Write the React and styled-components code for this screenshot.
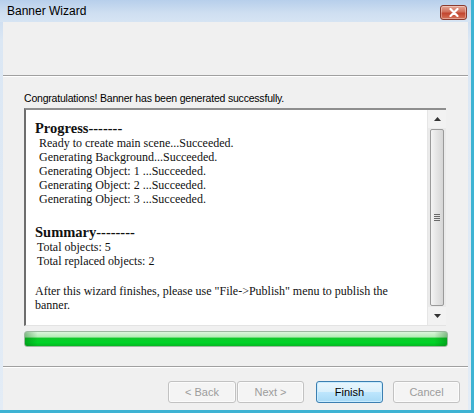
import React from 'react'
import styled, { createGlobalStyle } from 'styled-components'

const Global = createGlobalStyle`
  html, body { margin:0; padding:0; background:#f0f0f0; }
  body { font-family:"Liberation Sans", "DejaVu Sans", sans-serif; }
`;

const Window = styled.div`
  width:474px;
  height:413px;
  box-sizing:border-box;
  display:flex;
  flex-direction:column;
  background:linear-gradient(#c2d6ee, #dbe7f4 40px, #e3ecf6);
  border-right:3px solid #3eb3d3;
  border-bottom:3px solid #3eb3d3;
  overflow:hidden;
`;

const TitleBar = styled.div`
  height:22px;
  flex:none;
  display:flex;
  align-items:center;
  justify-content:space-between;
  padding:0 4px 0 7px;
  background:linear-gradient(#b7cfeb, #cfdff1 60%, #d6e4f3);
`;

const Title = styled.span`
  font-size:12px;
  color:#000;
`;

const CloseButton = styled.div`
  width:27px;
  height:15px;
  margin-top:2px;
  border:1px solid #8a3a2e;
  border-radius:3px;
  box-sizing:border-box;
  background:linear-gradient(#e6a594, #d0705c 45%, #c2452f 55%, #d5735a);
  display:flex;
  align-items:center;
  justify-content:center;
  box-shadow:inset 0 0 0 1px rgba(255,255,255,0.35);
`;

const Body = styled.div`
  flex:1;
  display:flex;
  flex-direction:column;
  margin-left:3px;
  margin-right:3px;
  background:#f0f0f0;
`;

const Header = styled.div`
  height:53px;
  flex:none;
  border-bottom:1px solid #a0a0a0;
  box-shadow:0 1px 0 #fff;
`;

const Content = styled.div`
  flex:1;
  display:flex;
  flex-direction:column;
  padding:15px 22px 0 21px;
`;

const Label = styled.div`
  font-size:10.5px;
  letter-spacing:-0.2px;
  color:#000;
  height:17px;
  line-height:14px;
`;

const TextBox = styled.div`
  height:218px;
  box-sizing:border-box;
  display:flex;
  background:#fff;
  border-top:2px solid #8e8e8e;
  border-left:2px solid #6e6e6e;
  border-bottom:1px solid #e3e3e3;
`;

const Report = styled.div`
  flex:1;
  padding:10px 30px 0 9px;
  font-family:"Liberation Serif", "Times New Roman", serif;
  font-size:12px;
  line-height:14px;
  color:#111;
`;

const Heading = styled.div`
  font-weight:bold;
  font-size:14.5px;
  line-height:16px;
  margin-top:${p => p.gap || 0}px;
`;

const Line = styled.div`
  padding-left:${p => p.indent || 0}px;
  margin-top:${p => p.gap || 0}px;
`;

const ScrollBar = styled.div`
  width:18px;
  display:flex;
  flex-direction:column;
  background:#eaeaea;
  border-left:1px solid #e6e6e6;
`;

const Arrow = styled.div`
  height:18px;
  display:flex;
  align-items:center;
  justify-content:center;
  background:#f2f2f2;
`;

const Thumb = styled.div`
  flex:1;
  margin:1px 2px;
  border:1px solid #9a9a9a;
  border-radius:2px;
  background:linear-gradient(90deg, #f4f4f4, #e4e4e4 50%, #d6d6d6);
  display:flex;
  align-items:center;
  justify-content:center;
`;

const Grip = styled.div`
  width:6px;
  height:7px;
  background:repeating-linear-gradient(#6a6a6a 0 1px, transparent 1px 2px);
`;

const ProgressBar = styled.div`
  height:16px;
  margin:5px -2px 0 0;
  border:1px solid #9db8a0;
  border-radius:3px;
  box-sizing:border-box;
  background:
    linear-gradient(90deg, rgba(0,90,10,0.35), transparent 3%, transparent 97%, rgba(0,90,10,0.35)),
    linear-gradient(#dcf6dc, #b5ecb6 35%, #10c82a 45%, #00d428 75%, #06b822);
`;

const Footer = styled.div`
  height:44px;
  flex:none;
  box-sizing:border-box;
  border-top:1px solid #a0a0a0;
  box-shadow:inset 0 1px 0 #fff;
  display:flex;
  align-items:flex-start;
  justify-content:flex-end;
  padding:14px 8px 0 0;
  margin-top:19px;
`;

const Button = styled.button`
  width:${p => p.w || 67}px;
  height:22px;
  margin-left:${p => p.gap || 0}px;
  padding:0;
  font-family:"Liberation Sans", "DejaVu Sans", sans-serif;
  font-size:11px;
  border-radius:3px;
  box-sizing:border-box;
  color:${p => p.disabled ? '#9c9c9c' : '#000'};
  border:1px solid ${p => p.primary ? '#3c7fb1' : p.disabled ? '#c2c2c2' : '#707070'};
  background:${p => p.primary
    ? 'linear-gradient(#eaf6fd, #d9f0fc 50%, #bee6fd 50%, #a7d9f5)'
    : '#f4f4f4'};
  box-shadow:${p => p.primary ? 'inset 0 0 0 1px #c8ecff' : 'inset 0 0 0 1px #fbfbfb'};
`;

const steps = [
  'Ready to create main scene...Succeeded.',
  'Generating Background...Succeeded.',
  'Generating Object: 1 ...Succeeded.',
  'Generating Object: 2 ...Succeeded.',
  'Generating Object: 3 ...Succeeded.',
]

const App = () => {
  return (
    <Window>
      <Global />
      <TitleBar>
        <Title>Banner Wizard</Title>
        <CloseButton>
          <svg width="10" height="9" viewBox="0 0 10 9">
            <path d="M1.5 1 L8.5 8 M8.5 1 L1.5 8" stroke="#fff" strokeWidth="2.2" strokeLinecap="round" />
          </svg>
        </CloseButton>
      </TitleBar>
      <Body>
        <Header />
        <Content>
          <Label>Congratulations! Banner has been generated successfully.</Label>
          <TextBox>
            <Report>
              <Heading>Progress-------</Heading>
              {steps.map(s => <Line key={s} indent={4}>{s}</Line>)}
              <Heading gap={18}>Summary--------</Heading>
              <Line indent={2}>Total objects: 5</Line>
              <Line indent={2}>Total replaced objects: 2</Line>
              <Line gap={16}>After this wizard finishes, please use "File-&gt;Publish" menu to publish the banner.</Line>
            </Report>
            <ScrollBar>
              <Arrow>
                <svg width="7" height="4" viewBox="0 0 7 4"><path d="M0 4 L3.5 0 L7 4Z" fill="#333" /></svg>
              </Arrow>
              <Thumb><Grip /></Thumb>
              <Arrow>
                <svg width="7" height="4" viewBox="0 0 7 4"><path d="M0 0 L3.5 4 L7 0Z" fill="#333" /></svg>
              </Arrow>
            </ScrollBar>
          </TextBox>
          <ProgressBar />
        </Content>
        <Footer>
          <Button disabled w={68}>&lt; Back</Button>
          <Button disabled gap={1}>Next &gt;</Button>
          <Button primary gap={12}>Finish</Button>
          <Button disabled gap={10}>Cancel</Button>
        </Footer>
      </Body>
    </Window>
  )
}

export default App
